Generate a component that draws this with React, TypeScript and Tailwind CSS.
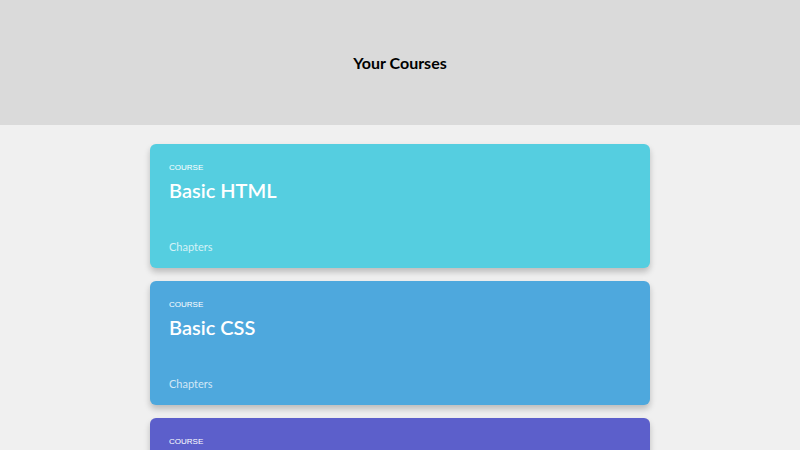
import React from "react";

const courses = [
    { title: "Basic HTML", color: "bg-[#55cee0]" },
    { title: "Basic CSS", color: "bg-[#4ea8dd]" },
    { title: "Basic JavaScript", color: "bg-[#5c5fcb]" },
];

const App = () => {
    return (
        <div className="min-h-screen bg-[#f0f0f0]" style={{ fontFamily: "Lato, 'Open Sans', sans-serif" }}>
            <header className="h-[125px] bg-[#dadada] flex items-center justify-center">
                <h1 className="text-[16px] font-bold text-black">Your Courses</h1>
            </header>
            <div className="flex flex-col items-center gap-[13px] pt-[19px] pb-8">
                {courses.map((course) => (
                    <div
                        key={course.title}
                        className={`${course.color} w-[500px] h-[124px] rounded-[6px] shadow-[0_4px_6px_rgba(0,0,0,0.22)] flex flex-col px-[19px] pt-[19px] pb-[14px] text-white`}
                    >
                        <p className="text-[8px] leading-[10px] uppercase" style={{ fontFamily: "'Liberation Sans', Arial, sans-serif" }}>Course</p>
                        <h2 className="text-[20px] leading-[26px] mt-[4px] font-semibold">{course.title}</h2>
                        <div className="flex-1" />
                        <p className="text-[11px] leading-[14px] text-white/75">Chapters</p>
                    </div>
                ))}
            </div>
        </div>
    );
};

export default App;
